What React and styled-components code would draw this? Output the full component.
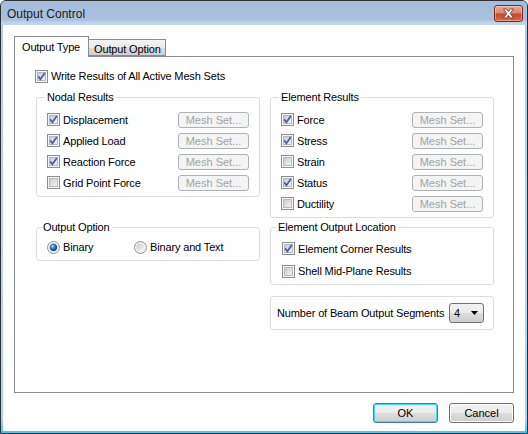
import React from "react";
import styled, { createGlobalStyle } from "styled-components";

const GlobalStyle = createGlobalStyle`
  html, body {
    margin: 0;
    padding: 0;
    background: #ffffff;
  }
  body {
    font-family: "Liberation Sans", Arial, sans-serif;
    font-size: 11px;
    letter-spacing: -0.15px;
    color: #000;
  }
`;

const Window = styled.div`
  width: 528px;
  height: 434px;
  box-sizing: border-box;
  border: 1px solid #2f3032;
  border-radius: 6px 6px 0 0;
  background: linear-gradient(#9fb9da 0px, #b3cbe6 22px, #bcd3ec 60%, #a9d3ef 97%, #45c2ee 100%);
  display: flex;
  flex-direction: column;
  overflow: hidden;
`;

const TitleBar = styled.div`
  height: 24px;
  display: flex;
  align-items: flex-start;
  justify-content: space-between;
  padding: 0 4px 0 6px;
  background: linear-gradient(#a4bddc 0px, #a9c1de 19px, #bcd2ea 21px, #c3d7ed 24px);
`;

const Title = styled.span`
  font-size: 12px;
  letter-spacing: 0;
  line-height: 14px;
  margin-top: 6px;
  color: #1b1b1b;
`;

const CloseButton = styled.button`
  width: 29px;
  height: 17px;
  margin-top: 4px;
  padding: 0;
  border: 1px solid #7a2a20;
  border-radius: 3px;
  background: linear-gradient(#eaa99a 0%, #dc8873 45%, #c8472c 55%, #d8694b 100%);
  display: flex;
  align-items: center;
  justify-content: center;
  box-shadow: inset 0 0 0 1px rgba(255, 255, 255, 0.35);
`;

const Client = styled.div`
  flex: 1;
  margin: 0 2px 2px;
  background: #ffffff;
  padding: 11px 11px 0 11px;
  display: flex;
  flex-direction: column;
`;

const TabStrip = styled.div`
  display: flex;
  align-items: flex-end;
  height: 20px;
  position: relative;
  z-index: 1;
`;

const Tab = styled.div`
  box-sizing: border-box;
  height: ${(p) => (p.$active ? "21px" : "17px")};
  margin-bottom: ${(p) => (p.$active ? "-1px" : "0")};
  margin-left: ${(p) => (p.$active ? "0" : "-1px")};
  padding: ${(p) => (p.$active ? "3px 8px 0 7px" : "2px 4px 0 5px")};
  border: 1px solid #898c95;
  border-bottom: ${(p) => (p.$active ? "none" : "1px solid #898c95")};
  background: ${(p) =>
    p.$active ? "#ffffff" : "linear-gradient(#f3f3f3, #ebebeb 50%, #dcdcdc 51%, #cfcfcf)"};
  line-height: 14px;
  white-space: nowrap;
`;

const Panel = styled.div`
  box-sizing: border-box;
  height: 337px;
  border: 1px solid #898c95;
  padding: 11px 19px 0 21px;
  display: flex;
  flex-direction: column;
`;

const WriteRow = styled.label`
  display: flex;
  align-items: center;
  height: 14px;
  margin-top: 1px;
  margin-bottom: 8px;
  margin-left: -1px;
  gap: 3px;
`;

const Columns = styled.div`
  display: grid;
  grid-template-columns: 224px 224px;
  column-gap: 10px;
  row-gap: 3px;
  align-items: start;
`;

const Column = styled.div`
  display: flex;
  flex-direction: column;
`;

const Group = styled.fieldset`
  margin: 0;
  min-width: 0;
  border: 1px solid #d5dfe5;
  border-radius: 3px;
  padding: ${(p) => p.$pad || "5px 10px 3px 10px"};
`;

const Legend = styled.legend`
  padding: 0 2px;
  margin-left: ${(p) => p.$shift || "-2px"};
  line-height: 13px;
`;

const OptionRow = styled.div`
  display: flex;
  align-items: center;
  height: ${(p) => p.$h || "21px"};
`;

const ItemLabel = styled.span`
  margin-left: 3px;
  white-space: nowrap;
`;

const MeshButton = styled.button`
  margin-left: auto;
  width: 71px;
  height: 16px;
  padding: 0;
  box-sizing: border-box;
  border: 1px solid #adb2b5;
  border-radius: 3px;
  background: #f4f4f4;
  color: #a3a3a3;
  font-family: "Liberation Sans", Arial, sans-serif;
  font-size: 11px;
  letter-spacing: 0;
  line-height: 14px;
`;

const RadioRow = styled.div`
  display: grid;
  grid-template-columns: 87px auto;
  height: 16px;
  align-items: center;
`;

const RadioItem = styled.label`
  display: flex;
  align-items: center;
`;

const BeamBox = styled.div`
  box-sizing: border-box;
  margin-top: 11px;
  height: 34px;
  border: 1px solid #d5dfe5;
  border-radius: 3px;
  padding: 0 9px 0 6px;
  display: flex;
  align-items: center;
  justify-content: space-between;
`;

const Select = styled.div`
  box-sizing: border-box;
  width: 35px;
  height: 20px;
  border: 1px solid #707070;
  border-radius: 3px;
  background: linear-gradient(#f2f2f2, #ebebeb 50%, #dddddd 51%, #cfcfcf);
  display: flex;
  align-items: center;
  justify-content: space-between;
  padding: 0 5px 0 4px;
`;

const Footer = styled.div`
  display: flex;
  justify-content: flex-end;
  gap: 11px;
  margin-top: 10px;
`;

const DialogButton = styled.button`
  box-sizing: border-box;
  width: 65px;
  height: 20px;
  padding: 0;
  border: 1px solid ${(p) => (p.$default ? "#3c7fb1" : "#707070")};
  border-radius: 3px;
  background: linear-gradient(#f2f2f2, #ebebeb 50%, #dddddd 51%, #cfcfcf);
  box-shadow: ${(p) => (p.$default ? "inset 0 0 0 1px #48d8fb" : "inset 0 0 0 1px #fcfcfc")};
  font-family: "Liberation Sans", Arial, sans-serif;
  font-size: 11px;
  color: #000;
`;

function CheckBox({ checked }) {
  return (
    <svg width="13" height="13" viewBox="0 0 13 13" style={{ flex: "none" }}>
      <defs>
        <linearGradient id="cbIn" x1="0" y1="0" x2="1" y2="1">
          <stop offset="0" stopColor="#c4c9d2" />
          <stop offset="1" stopColor="#f6f6f6" />
        </linearGradient>
      </defs>
      <rect x="0.5" y="0.5" width="12" height="12" fill="#f6f6f6" stroke="#8f8f8f" />
      <rect x="2.5" y="2.5" width="8" height="8" fill="url(#cbIn)" stroke="#b4b8bf" />
      {checked && (
        <path d="M3.2 6.4 L5.4 9.2 L9.8 2.9" fill="none" stroke="#4660a6" strokeWidth="1.7" />
      )}
    </svg>
  );
}

function Radio({ selected }) {
  return (
    <svg width="13" height="13" viewBox="0 0 13 13" style={{ flex: "none" }}>
      <defs>
        <linearGradient id="rdIn" x1="0" y1="0" x2="1" y2="1">
          <stop offset="0" stopColor="#c9ccd2" />
          <stop offset="1" stopColor="#fafafa" />
        </linearGradient>
        <radialGradient id="rdDot" cx="0.35" cy="0.3" r="0.75">
          <stop offset="0" stopColor="#b9e6ff" />
          <stop offset="0.45" stopColor="#2d86cc" />
          <stop offset="1" stopColor="#0e3f7a" />
        </radialGradient>
      </defs>
      <circle cx="6.5" cy="6.5" r="6" fill="#f4f4f4" stroke="#8f8f8f" />
      <circle cx="6.5" cy="6.5" r="4.2" fill="url(#rdIn)" />
      {selected && <circle cx="6.5" cy="6.5" r="3.4" fill="url(#rdDot)" stroke="#1b4d86" strokeWidth="0.6" />}
    </svg>
  );
}

function CheckItem({ label, checked, mesh, h }) {
  return (
    <OptionRow $h={h}>
      <CheckBox checked={checked} />
      <ItemLabel>{label}</ItemLabel>
      {mesh && <MeshButton disabled>Mesh Set...</MeshButton>}
    </OptionRow>
  );
}

const nodal = [
  ["Displacement", true],
  ["Applied Load", true],
  ["Reaction Force", true],
  ["Grid Point Force", false],
];

const element = [
  ["Force", true],
  ["Stress", true],
  ["Strain", false],
  ["Status", true],
  ["Ductility", false],
];

export default function App() {
  return (
    <>
      <GlobalStyle />
      <Window>
        <TitleBar>
          <Title>Output Control</Title>
          <CloseButton aria-label="Close">
            <svg width="13" height="11" viewBox="0 0 13 11">
              <path
                d="M1.5 1 L4.5 1 L6.5 3.6 L8.5 1 L11.5 1 L8.2 5.5 L11.5 10 L8.5 10 L6.5 7.4 L4.5 10 L1.5 10 L4.8 5.5 Z"
                fill="#ffffff"
                stroke="#6b2b22"
                strokeWidth="0.8"
              />
            </svg>
          </CloseButton>
        </TitleBar>
        <Client>
          <TabStrip>
            <Tab $active>Output Type</Tab>
            <Tab>Output Option</Tab>
          </TabStrip>
          <Panel>
            <WriteRow>
              <CheckBox checked />
              <span>Write Results of All Active Mesh Sets</span>
            </WriteRow>
            <Columns>
              <Group>
                <Legend>Nodal Results</Legend>
                {nodal.map(([label, on]) => (
                  <CheckItem key={label} label={label} checked={on} mesh />
                ))}
              </Group>
              <Group>
                <Legend>Element Results</Legend>
                {element.map(([label, on]) => (
                  <CheckItem key={label} label={label} checked={on} mesh />
                ))}
              </Group>
              <Group $pad="5px 10px 5px 10px">
                <Legend $shift="-6px">Output Option</Legend>
                <RadioRow>
                  <RadioItem>
                    <Radio selected />
                    <ItemLabel>Binary</ItemLabel>
                  </RadioItem>
                  <RadioItem>
                    <Radio />
                    <ItemLabel>Binary and Text</ItemLabel>
                  </RadioItem>
                </RadioRow>
              </Group>
              <Column>
                <Group $pad="3px 10px 2px 11px">
                  <Legend $shift="-6px">Element Output Location</Legend>
                  <CheckItem label="Element Corner Results" checked h="23px" />
                  <CheckItem label="Shell Mid-Plane Results" checked={false} h="22px" />
                </Group>
                <BeamBox>
                  <span>Number of Beam Output Segments</span>
                  <Select>
                    <span>4</span>
                    <svg width="7" height="4" viewBox="0 0 7 4">
                      <path d="M0 0 L7 0 L3.5 4 Z" fill="#000" />
                    </svg>
                  </Select>
                </BeamBox>
              </Column>
            </Columns>
          </Panel>
          <Footer>
            <DialogButton $default>OK</DialogButton>
            <DialogButton>Cancel</DialogButton>
          </Footer>
        </Client>
      </Window>
    </>
  );
}
